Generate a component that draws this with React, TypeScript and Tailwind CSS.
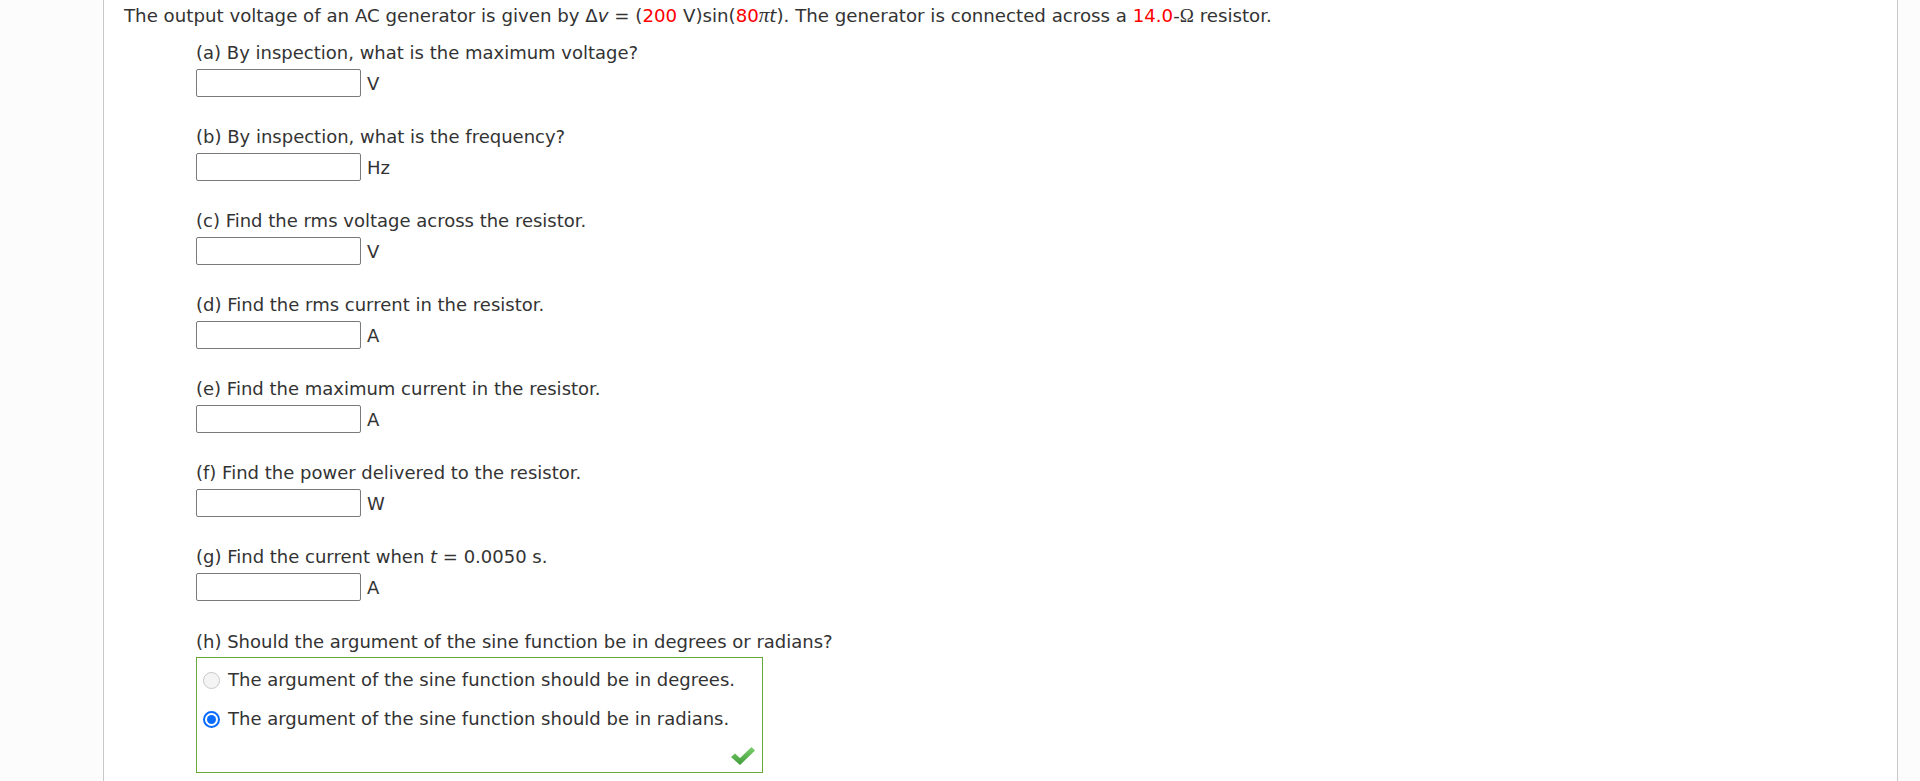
import React from "react";

type Part = {
    label: React.ReactNode;
    unit: string;
};

const parts: Part[] = [
    { label: "(a) By inspection, what is the maximum voltage?", unit: "V" },
    { label: "(b) By inspection, what is the frequency?", unit: "Hz" },
    { label: "(c) Find the rms voltage across the resistor.", unit: "V" },
    { label: "(d) Find the rms current in the resistor.", unit: "A" },
    { label: "(e) Find the maximum current in the resistor.", unit: "A" },
    { label: "(f) Find the power delivered to the resistor.", unit: "W" },
    {
        label: (
            <>
                (g) Find the current when <i>t</i> = 0.0050 s.
            </>
        ),
        unit: "A"
    }
];

function Check() {
    return (
        <svg width="26" height="20" viewBox="0 0 26 20" aria-hidden="true">
            <defs>
                <linearGradient id="chk" x1="0" y1="0" x2="0" y2="1">
                    <stop offset="0" stopColor="#7ccf6c" />
                    <stop offset="1" stopColor="#3f9b3a" />
                </linearGradient>
            </defs>
            <path d="M1 11 L5 7.5 L10 12 L21.5 1 L25 4.5 L10 19 Z" fill="url(#chk)" />
        </svg>
    );
}

function Radio({ checked }: { checked: boolean }) {
    if (checked) {
        return (
            <span className="flex h-[17px] w-[17px] shrink-0 items-center justify-center rounded-full border-2 border-[#0a6cff] bg-white">
                <span className="h-[9px] w-[9px] rounded-full bg-[#0a6cff]" />
            </span>
        );
    }
    return <span className="h-[17px] w-[17px] shrink-0 rounded-full border border-[#c8c8c8] bg-[#f4f4f4]" />;
}

export default function App() {
    return (
        <div className="min-h-[781px] w-full bg-[#fcfcfc] font-['DejaVu_Sans',Verdana,sans-serif] text-[18px] text-[#333]">
            <div className="ml-[103px] mr-[22px] min-h-[781px] border-x border-[#c9c9c9] bg-white pl-[20px] pt-[4px]">
                <p className="text-[18.2px] leading-[22px]">
                    The output voltage of an AC generator is given by Δ<i>v</i> = (<span className="text-[#f00]">200</span> V)sin(
                    <span className="text-[#f00]">80</span>
                    <i className="font-['Liberation_Serif',serif] text-[21px]">π</i>
                    <i>t</i>). The generator is connected across a <span className="text-[#f00]">14.0</span>-
                    <span className="font-['Liberation_Serif',serif] text-[19px]">Ω</span> resistor.
                </p>

                <div className="ml-[72px] mt-[15px]">
                    {parts.map((part, i) => (
                        <div key={i} className="mb-[29px]">
                            <p className="leading-[22px]">{part.label}</p>
                            <div className="mt-[5px] flex items-center gap-[6px]">
                                <div className="h-[28px] w-[165px] rounded-[2px] border border-[#7a7a7a] bg-white" />
                                <span>{part.unit}</span>
                            </div>
                        </div>
                    ))}

                    <p className="pt-[1px] leading-[22px]">(h) Should the argument of the sine function be in degrees or radians?</p>
                    <div className="mt-[4px] flex h-[116px] w-[567px] flex-col border border-[#67a83a] pl-[6px] pt-[11px]">
                        <label className="flex items-center gap-[8px] leading-[22px]">
                            <Radio checked={false} />
                            The argument of the sine function should be in degrees.
                        </label>
                        <label className="mt-[17px] flex items-center gap-[8px] leading-[22px]">
                            <Radio checked={true} />
                            The argument of the sine function should be in radians.
                        </label>
                        <div className="mt-auto mb-[6px] mr-[6px] flex justify-end">
                            <Check />
                        </div>
                    </div>
                </div>
            </div>
        </div>
    );
}
